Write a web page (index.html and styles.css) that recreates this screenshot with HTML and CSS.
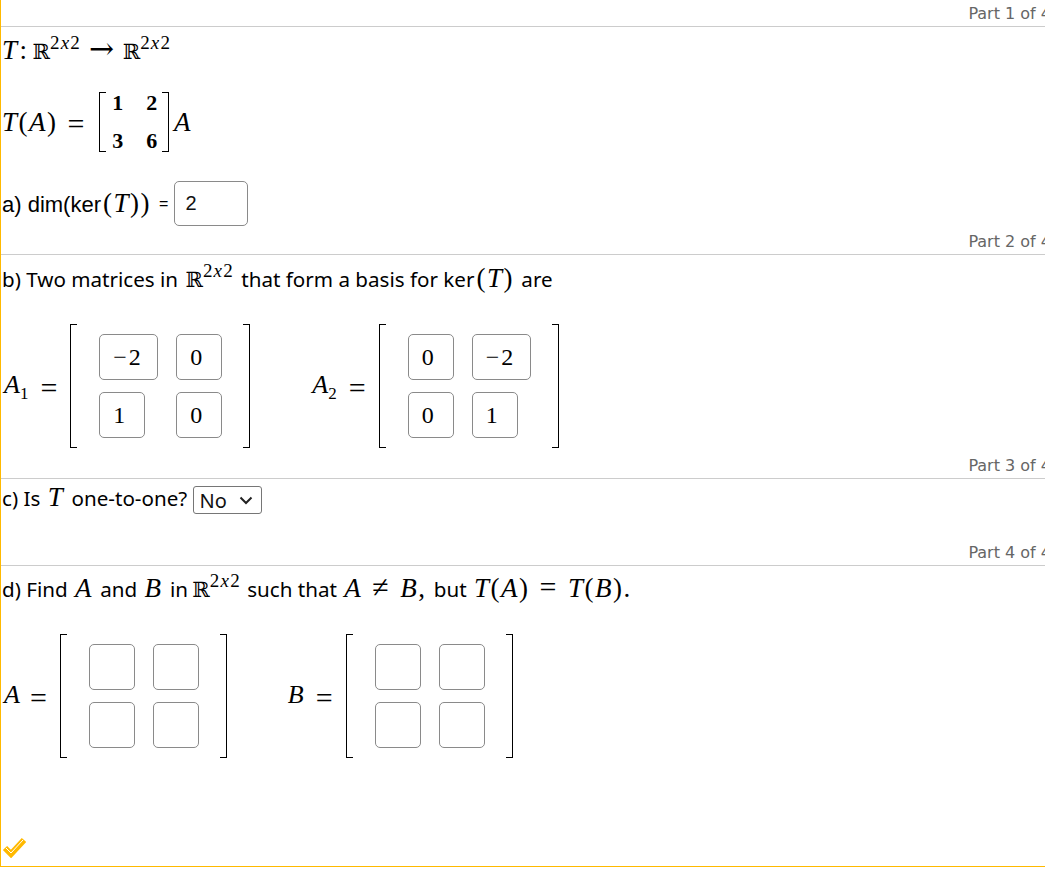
FILE: index.html
```html
<!DOCTYPE html>
<html lang="en">
<head>
    <meta charset="UTF-8">
    <meta name="viewport" content="width=device-width, initial-scale=1.0">
    <title>Linear transformation kernel</title>
    <link rel="stylesheet" href="styles.css">
</head>
<body>

    <div class="question">

        <div class="part part-1">
            <div class="part-label">Part 1 of 4</div>
            <div class="part-body">
                <p class="math-line line-map"><i>T</i><span class="colon">:</span><span class="reals">ℝ</span><sup>2<i>x</i>2</sup><span class="arrow">→</span><span class="reals">ℝ</span><sup>2<i>x</i>2</sup></p>
                <div class="math-line line-def">
                    <span class="def-lhs"><i>T</i>(<i>A</i>)</span>
                    <span class="equals def-equals">=</span>
                    <div class="small-matrix">
                        <span class="bracket left"></span>
                        <div class="small-grid">
                            <span>1</span><span>2</span>
                            <span>3</span><span>6</span>
                        </div>
                        <span class="bracket right"></span>
                    </div>
                    <i class="after-matrix">A</i>
                </div>
                <div class="line-a">
                    <span>a) dim(ker<span class="math">(<i>T</i>))</span></span>
                    <span class="eq-small">=</span>
                    <input class="answer" type="text" value="2">
                </div>
            </div>
        </div>

        <div class="part part-2">
            <div class="part-label">Part 2 of 4</div>
            <div class="part-body">
                <p class="prose">b) Two matrices in <span class="math"><span class="reals">ℝ</span><sup>2<i>x</i>2</sup></span> that form a basis for ker<span class="math">(<i>T</i>)</span> are</p>
                <div class="matrix-row">
                    <div class="matrix-eq">
                        <span class="matrix-name"><i>A</i><sub>1</sub></span>
                        <span class="equals">=</span>
                        <div class="matrix">
                            <span class="bracket left"></span>
                            <div class="cells">
                                <div class="cell wide">−2</div><div class="cell">0</div>
                                <div class="cell">1</div><div class="cell">0</div>
                            </div>
                            <span class="bracket right"></span>
                        </div>
                    </div>
                    <div class="matrix-eq next">
                        <span class="matrix-name"><i>A</i><sub>2</sub></span>
                        <span class="equals">=</span>
                        <div class="matrix">
                            <span class="bracket left"></span>
                            <div class="cells">
                                <div class="cell">0</div><div class="cell wide">−2</div>
                                <div class="cell">0</div><div class="cell">1</div>
                            </div>
                            <span class="bracket right"></span>
                        </div>
                    </div>
                </div>
            </div>
        </div>

        <div class="part part-3">
            <div class="part-label">Part 3 of 4</div>
            <div class="part-body">
                <p class="prose">c) Is <span class="math"><i>T</i></span> one-to-one?
                    <span class="choice-wrap">
                        <select class="choice">
                            <option>No</option>
                            <option>Yes</option>
                        </select>
                        <svg class="chevron" width="14" height="9" viewBox="0 0 14 9">
                            <polyline points="1.5,1.5 7,7 12.5,1.5" fill="none" stroke="#222" stroke-width="2"/>
                        </svg>
                    </span>
                </p>
            </div>
        </div>

        <div class="part part-4">
            <div class="part-label">Part 4 of 4</div>
            <div class="part-body">
                <p class="prose">d) Find <span class="math"><i>A</i></span> and <span class="math"><i>B</i></span> in <span class="math"><span class="reals">ℝ</span><sup>2<i>x</i>2</sup></span> such that <span class="math"><i>A</i><span class="rel">≠</span><i>B</i>,</span> but <span class="math"><i>T</i>(<i>A</i>)<span class="rel">=</span><i>T</i>(<i>B</i>).</span></p>
                <div class="matrix-row">
                    <div class="matrix-eq">
                        <span class="matrix-name"><i>A</i></span>
                        <span class="equals">=</span>
                        <div class="matrix">
                            <span class="bracket left"></span>
                            <div class="cells">
                                <div class="cell"></div><div class="cell"></div>
                                <div class="cell"></div><div class="cell"></div>
                            </div>
                            <span class="bracket right"></span>
                        </div>
                    </div>
                    <div class="matrix-eq next">
                        <span class="matrix-name name-b"><i>B</i></span>
                        <span class="equals">=</span>
                        <div class="matrix">
                            <span class="bracket left"></span>
                            <div class="cells">
                                <div class="cell"></div><div class="cell"></div>
                                <div class="cell"></div><div class="cell"></div>
                            </div>
                            <span class="bracket right"></span>
                        </div>
                    </div>
                </div>
                <svg class="check" width="24" height="22" viewBox="0 0 24 22">
                    <polyline points="3,12 9,18 22,4" fill="none" stroke="#ffb900" stroke-width="6"/>
                    <polyline points="4,12 9,17 21,4" fill="none" stroke="#fff" stroke-width="1"/>
                </svg>
            </div>
        </div>

    </div>

</body>
</html>
```

FILE: styles.css
```css
html, body {
    margin: 0;
    padding: 0;
    width: 1045px;
    height: 874px;
    overflow: hidden;
    background: #fff;
}

.question {
    width: 1060px;
    height: 866px;
    border-left: 1px solid #ffb900;
    border-bottom: 1px solid #ffb900;
    font-family: "Noto Sans", Tahoma, sans-serif;
    font-size: 20.6px;
    color: #000;
}

.part-label {
    height: 27px;
    padding-right: 10px;
    box-sizing: border-box;
    text-align: right;
    font-family: "DejaVu Sans", Verdana, sans-serif;
    font-size: 16px;
    line-height: 27px;
    color: #666;
    border-bottom: 1px solid #ccc;
}

.part-1 { height: 228px; }
.part-2 { height: 224px; }
.part-3 { height: 87px; }
.part-4 { height: 301px; }

.part-body {
    position: relative;
    padding-left: 1px;
}

.math, .math-line, .cell, .small-grid, .matrix-name, .equals {
    font-family: "Liberation Serif", "DejaVu Serif", serif;
}

.math-line {
    font-size: 27px;
    letter-spacing: 0.5px;
}

.math {
    padding: 0 2px;
    font-size: 27px;
    letter-spacing: 1.5px;
}

.reals {
    font-family: "DejaVu Serif", serif;
    font-size: 21px;
    letter-spacing: 0;
}

sup {
    font-family: "Liberation Serif", serif;
    font-size: 19px;
    letter-spacing: 1.2px;
    line-height: 0;
    vertical-align: 10px;
}

.part-4 .reals { margin-left: -3px; }
.part-4 sup { margin-right: -1px; }

p { margin: 0; }

.line-map {
    padding-top: 6px;
    line-height: 34px;
}

.colon { margin: 0 5px 0 2px; }

.arrow {
    margin: 0 8px;
    font-family: "DejaVu Serif", serif;
    font-size: 30px;
    line-height: 0;
}

.line-def {
    display: flex;
    align-items: center;
    margin-top: 23px;
}

.def-lhs { letter-spacing: 1.5px; }

.equals {
    margin: 0 13px 0 10px;
    padding-top: 4px;
    font-size: 30px;
    line-height: 1;
}

.def-equals { margin: 0 14px 0 10px; }

.rel {
    margin: 0 10px;
    font-size: 30px;
    line-height: 0;
}

.small-matrix {
    display: flex;
    height: 60px;
}

.small-grid {
    display: grid;
    grid-template-columns: 20px 20px;
    grid-template-rows: 38px 38px;
    column-gap: 14px;
    align-content: center;
    align-items: center;
    justify-items: center;
    font-size: 22px;
    font-weight: bold;
    padding-left: 2px;
}

.after-matrix { margin-left: 5px; }

.bracket {
    display: block;
    width: 6px;
    border: solid #000;
    border-width: 1.5px 0;
}

.bracket.left { border-left-width: 1.5px; }
.bracket.right { border-right-width: 1.5px; }

.line-a {
    display: flex;
    align-items: center;
    margin-top: 29px;
    font-family: "Liberation Sans", Arial, sans-serif;
    font-size: 22px;
}

.eq-small {
    margin: 0 6px;
    font-size: 16px;
}

.answer {
    width: 74px;
    height: 45px;
    box-sizing: border-box;
    padding: 0 10px;
    border: 1px solid #8a8a8a;
    border-radius: 5px;
    font-family: "Liberation Sans", Arial, sans-serif;
    font-size: 20px;
    color: #111;
}

.prose {
    line-height: 28px;
    padding-top: 9px;
}

.part-3 .prose { padding-top: 4px; }
.part-4 .prose { padding-top: 8px; }

.matrix-row {
    display: flex;
    margin-top: 30px;
}

.matrix-eq {
    display: flex;
    align-items: center;
}

.matrix-eq.next { margin-left: 60px; }
.part-4 .matrix-eq.next { margin-left: 59px; }

.matrix-name {
    font-size: 26px;
    padding: 0 0 3px 2px;
}

.name-b { padding-right: 2px; }

sub {
    padding-right: 2px;
    font-size: 17px;
    line-height: 0;
}

.matrix {
    display: flex;
    height: 124px;
}

.cells {
    display: grid;
    grid-template-columns: auto auto;
    grid-auto-rows: 46px;
    justify-items: start;
    align-content: center;
    column-gap: 18px;
    row-gap: 12px;
    padding: 0 21px 0 22px;
}

.cell {
    width: 46px;
    height: 46px;
    box-sizing: border-box;
    padding-left: 13px;
    border: 1px solid #8a8a8a;
    border-radius: 5px;
    font-size: 24px;
    line-height: 44px;
}

.cell.wide {
    width: 59px;
    letter-spacing: 2px;
}

.check {
    position: absolute;
    left: 1px;
    top: 270px;
}

.choice-wrap {
    position: relative;
    display: inline-block;
    vertical-align: middle;
}

.choice {
    display: block;
    width: 69px;
    height: 28px;
    padding-left: 6px;
    appearance: none;
    font-family: "Noto Sans", Tahoma, sans-serif;
    font-size: 20px;
    color: #111;
    background: #fff;
    border: 1px solid #767676;
    border-radius: 3px;
}

.chevron {
    position: absolute;
    right: 9px;
    top: 10px;
    pointer-events: none;
}
```
